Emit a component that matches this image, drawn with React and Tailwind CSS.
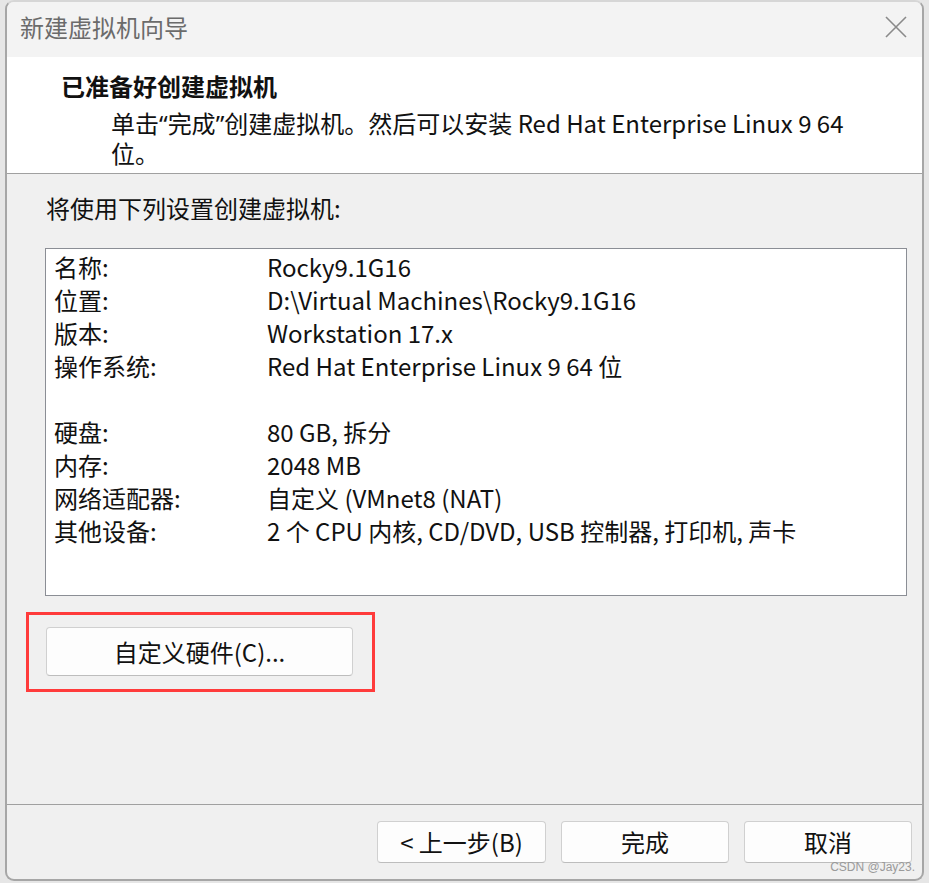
import React from 'react'

const font = { fontFamily: '"Noto Sans CJK SC", "Noto Sans", sans-serif' }
const latin = { fontFamily: '"Noto Sans", sans-serif' }

const rows = [
  ['名称:', 'Rocky9.1G16'],
  ['位置:', 'D:\\Virtual Machines\\Rocky9.1G16'],
  ['版本:', 'Workstation 17.x'],
  ['操作系统:', 'Red Hat Enterprise Linux 9 64 位'],
  null,
  ['硬盘:', '80 GB, 拆分'],
  ['内存:', '2048 MB'],
  ['网络适配器:', '自定义 (VMnet8 (NAT)'],
  ['其他设备:', '2 个 CPU 内核, CD/DVD, USB 控制器, 打印机, 声卡'],
]

const WinButton = ({ children, className = '' }) => (
  <button
    className={`h-[42px] rounded-[4px] border border-[#d0d0d0] border-b-[#bdbdbd] bg-[#fdfdfd] text-[24px] text-[#111] ${className}`}
  >
    {children}
  </button>
)

export default function App() {
  return (
    <div className="relative h-[883px] w-[929px] overflow-hidden bg-[#e6e6e6]" style={font}>
      {/* dialog window */}
      <div className="ml-[5px] flex h-[881px] w-[919px] flex-col overflow-hidden rounded-[9px] border-2 border-[#a6a6a6] border-t-[#d6d6d6] bg-[#f0f0f0]">
        {/* title bar */}
        <div className="flex h-[55px] shrink-0 items-center justify-between bg-[#f3f3f3] pb-[5px] pl-[13px] pr-[15px]">
          <span className="text-[24px] leading-none text-[#6b6b6b]">新建虚拟机向导</span>
          <svg width="22" height="22" viewBox="0 0 22 22">
            <path d="M1 1 L21 21 M21 1 L1 21" stroke="#8a8a8a" strokeWidth="1.6" fill="none" />
          </svg>
        </div>

        {/* header */}
        <div className="h-[117px] shrink-0 border-b border-[#a0a0a0] bg-white pt-[13px]">
          <div className="pl-[54px] text-[24px] font-bold leading-[32px] text-[#111]">已准备好创建虚拟机</div>
          <div className="mt-[6px] w-[880px] pl-[104px] text-[24px] leading-[29px] text-[#111]">
            单击<span style={latin}>“</span>完成<span style={latin}>”</span>创建虚拟机。然后可以安装 Red Hat Enterprise Linux 9 64 位。
          </div>
        </div>

        {/* body */}
        <div className="flex-1 pt-[17px]">
          <div className="pl-[39px] text-[24px] leading-[33px] text-[#111]">将使用下列设置创建虚拟机:</div>

          <div className="ml-[38px] mt-[24px] h-[348px] w-[862px] border border-[#8b8e95] bg-white pl-[8px] pt-[1px]">
            {rows.map((r, i) =>
              r ? (
                <div key={i} className="flex text-[24px] leading-[33px] text-[#111]">
                  <span className="w-[213px] shrink-0">{r[0]}</span>
                  <span className="whitespace-nowrap">{r[1]}</span>
                </div>
              ) : (
                <div key={i} className="h-[33px]" />
              )
            )}
          </div>

          <div className="ml-[19px] mt-[16px] w-[349px] border-[3px] border-[#ff3b3b] pb-[13px] pl-[17px] pt-[12px]">
            <button className="h-[49px] w-[307px] rounded-[4px] border border-[#d0d0d0] border-b-[#bdbdbd] bg-[#fdfdfd] text-[24px] text-[#111]">
              自定义硬件(C)...
            </button>
          </div>
        </div>

        {/* footer */}
        <div className="flex h-[75px] shrink-0 items-start justify-end gap-[15px] border-t border-[#a0a0a0] pr-[10px] pt-[16px]">
          <WinButton className="w-[169px]">&lt; 上一步(B)</WinButton>
          <WinButton className="w-[168px]">完成</WinButton>
          <WinButton className="w-[168px]">取消</WinButton>
        </div>
      </div>

      {/* watermark */}
      <div
        className="absolute bottom-[10px] right-[14px] text-[12px] leading-none text-[#9a9a9a]"
        style={{ fontFamily: '"Liberation Sans", Arial, sans-serif' }}
      >
        CSDN @Jay23.
      </div>
    </div>
  )
}
